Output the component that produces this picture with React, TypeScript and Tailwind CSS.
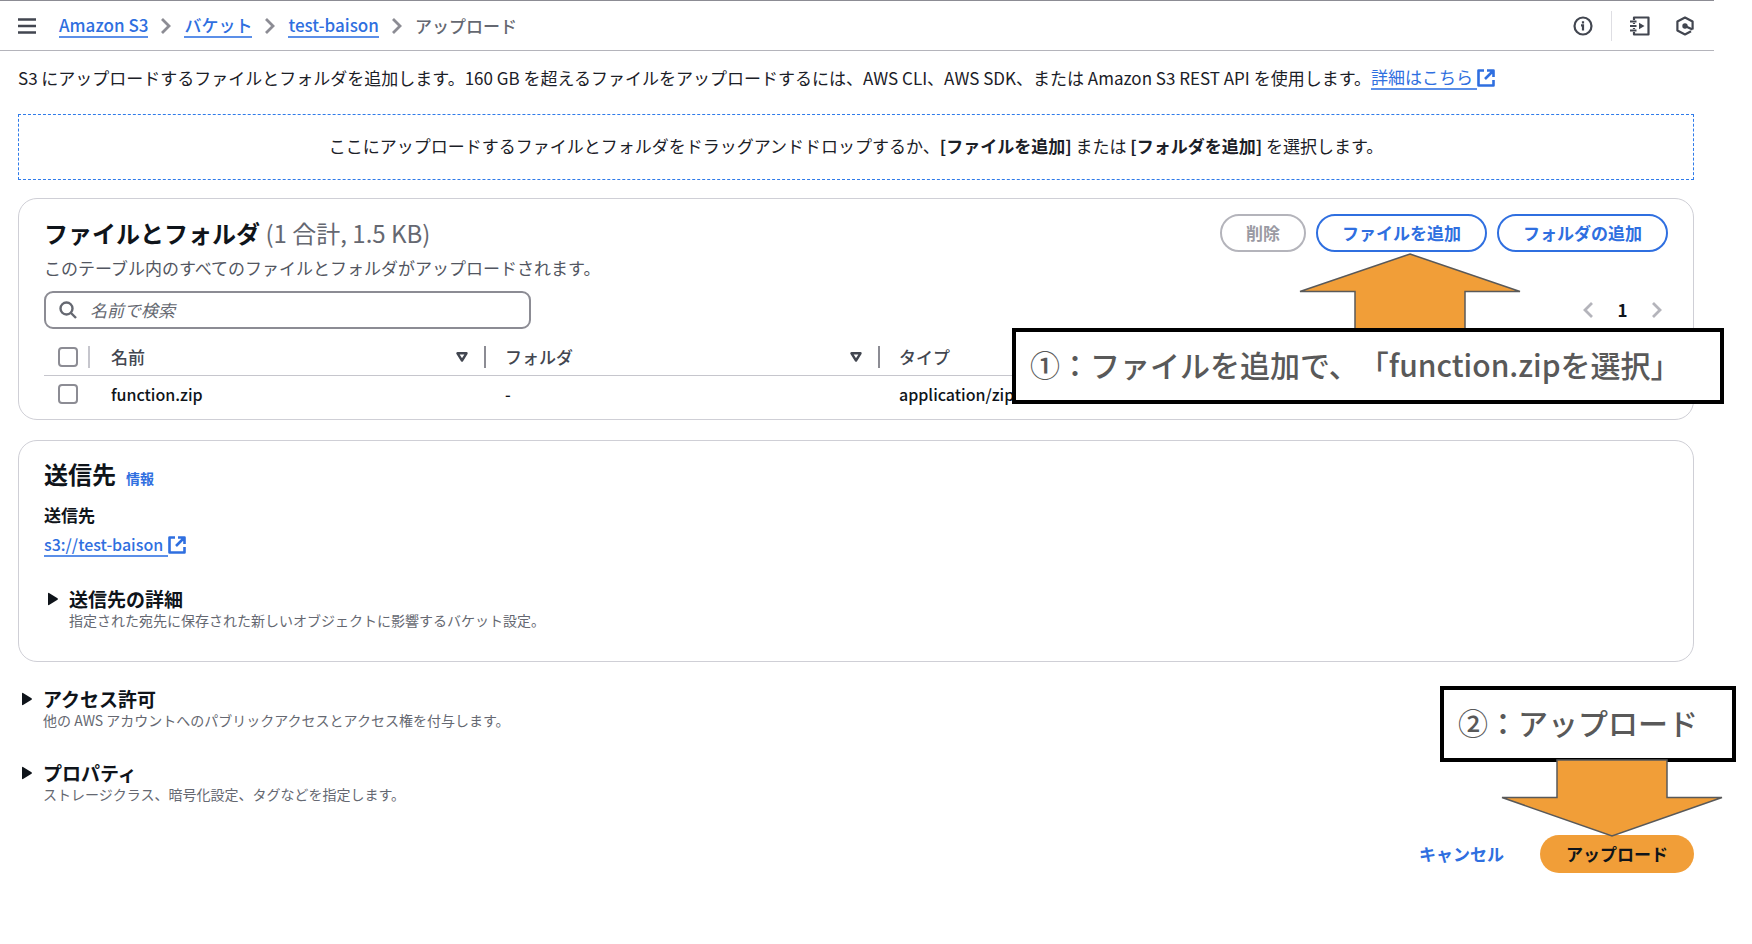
import { useState } from 'react';
import type { ReactNode } from 'react';

const files = [{ name: 'function.zip', folder: '-', type: 'application/zip' }];

function ChevronIcon({ className = '' }: { className?: string }) {
  return (
    <svg viewBox="0 0 10 16" className={`w-[10px] h-4 shrink-0 ${className}`} fill="none" stroke="currentColor" strokeWidth="2.8" aria-hidden="true">
      <path d="M1 1l7 7-7 7" />
    </svg>
  );
}

function ExternalIcon() {
  return (
    <svg viewBox="0 0 18 18" className="inline-block w-[18px] h-[18px] shrink-0" fill="none" stroke="currentColor" strokeWidth="2.6" strokeLinejoin="round" aria-hidden="true">
      <path d="M7 1.500H1.500v15h15V11M10 1.500h6.500V8M16.500 1.500L8 10" />
    </svg>
  );
}

function SortIcon() {
  return (
    <svg viewBox="0 0 12 10" className="w-3 h-[10px]" fill="none" stroke="currentColor" strokeWidth="2.4" strokeLinejoin="round" aria-hidden="true">
      <path d="M1.500 1.300h9L6 8.500z" />
    </svg>
  );
}

function Checkbox({ label }: { label: string }) {
  return (
    <input
      type="checkbox"
      aria-label={label}
      className="block appearance-none w-5 h-5 ml-[14px] rounded-[4px] border-2 border-[#8c8c94] bg-white checked:bg-[#2f6fe0]"
    />
  );
}

function HeaderCell({ children, sortable }: { children: ReactNode; sortable?: boolean }) {
  return (
    <th scope="col" className="p-0 text-left font-medium text-[#424650]">
      <div className="flex items-center justify-between h-[22px] pl-[21px] pr-[16px]">
        {children}
        {sortable && <SortIcon />}
      </div>
    </th>
  );
}

function Expandable({ title, description }: { title: string; description: string }) {
  const [open, setOpen] = useState(false);

  return (
    <div className="flex gap-[10px]">
      <svg viewBox="0 0 12 14" className="w-3 h-[14px] mt-[5px] ml-[3px] shrink-0" fill="#0f141a" aria-hidden="true">
        <path d="M1 1.500Q1 .5 2 1l8.500 5.300q1 .7 0 1.400L2 13q-1 .5-1-.5z" />
      </svg>
      <div>
        <h3>
          <button
            aria-expanded={open}
            onClick={() => setOpen(!open)}
            className="block text-[19px] leading-6 font-bold"
          >
            {title}
          </button>
        </h3>
        <p className="text-sm leading-[18px] text-[#656871]">{description}</p>
      </div>
    </div>
  );
}

function Callout({ className, children }: { className: string; children: ReactNode }) {
  return (
    <div
      className={`absolute z-10 flex items-center h-[76px] pl-[14px] pb-1 border-4 border-black bg-white text-3xl font-medium whitespace-nowrap text-[#595959] ${className}`}
    >
      {children}
    </div>
  );
}

function Header() {
  return (
    <header className="flex items-center h-[51px] mr-[38px] pl-[18px] pr-[19px] border-t border-b border-t-[#8c8c94] border-b-[#b4b4bb]">
      <button aria-label="メニュー" className="text-[#424650]">
        <svg viewBox="0 0 18 18" className="w-[18px] h-[18px]" stroke="currentColor" strokeWidth="2.400" aria-hidden="true">
          <path d="M0 2.500h18M0 9h18M0 15.500h18" />
        </svg>
      </button>
      <nav aria-label="breadcrumb" className="ml-[23px]">
        <ol className="flex items-center gap-[13px] leading-[22px] font-medium text-[#656871]">
          {['Amazon S3', 'バケット', 'test-baison'].map((item) => (
            <li key={item} className="flex items-center gap-[13px]">
              <a href="#" className="border-b-2 border-[#5b8fe8] text-[#2f6fe0]">{item}</a>
              <ChevronIcon className="text-[#8c8c94]" />
            </li>
          ))}
          <li>アップロード</li>
        </ol>
      </nav>
      <div className="ml-auto flex items-center text-[#424650]">
        <button aria-label="情報">
          <svg viewBox="0 0 20 20" className="w-5 h-5" fill="none" stroke="currentColor" strokeWidth="2.200" aria-hidden="true">
            <circle cx="10" cy="10" r="8.500" />
            <path d="M8 9.300h2V14.500M10 5.200v2.300" strokeWidth="2.200" />
          </svg>
        </button>
        <div className="w-px h-[30px] ml-[18px] mr-[18px] bg-[#dedee3]" />
        <button aria-label="チュートリアル">
          <svg viewBox="0 0 20 20" className="w-5 h-5" fill="none" stroke="currentColor" strokeWidth="2.200" strokeLinejoin="round" aria-hidden="true">
            <path d="M4 4V1.500h14.500v17H4V16M4 7v1M4 12v1" />
            <path d="M0 5.500h6.500M0 10h6.500M0 14.500h6.500" strokeWidth="1.800" />
            <path d="M9 6.800v6.400l5.500-3.200z" fill="currentColor" stroke="none" />
          </svg>
        </button>
        <button aria-label="Amazon Q" className="ml-[25px]">
          <svg viewBox="0 0 20 20" className="w-5 h-5" fill="none" stroke="currentColor" strokeWidth="2.200" strokeLinejoin="round" aria-hidden="true">
            <path d="M17.600 13.500V5.500L10 1.500 2.400 5.500v9L10 18.500l6-3.200" />
            <circle cx="10" cy="10" r="2.700" fill="currentColor" stroke="none" />
            <path d="M10 10l7.500 3.500" strokeWidth="2.400" />
          </svg>
        </button>
      </div>
    </header>
  );
}

function FilesPanel() {
  return (
    <section className="relative mt-[18px] pt-[15px] pb-[6px] px-[25px] border border-[#cfcfd6] rounded-[19px]">
      <div className="flex items-center justify-between">
        <h2 className="text-2xl leading-[38px] font-bold">
          ファイルとフォルダ <span className="font-normal text-[#656871]">(1 合計, 1.5 KB)</span>
        </h2>
        <div className="flex gap-[10px] font-bold">
          <button disabled className="h-[38px] px-6 border-2 border-[#b4b4bb] rounded-full text-[#9a9aa3]">削除</button>
          <button className="h-[38px] px-6 border-2 border-[#2f6fe0] rounded-full text-[#2f6fe0]">ファイルを追加</button>
          <button className="h-[38px] px-6 border-2 border-[#2f6fe0] rounded-full text-[#2f6fe0]">フォルダの追加</button>
        </div>
      </div>
      <p className="mt-1 leading-6 text-[#525661]">このテーブル内のすべてのファイルとフォルダがアップロードされます。</p>
      <div className="mt-[11px] flex items-center justify-between">
        <label className="flex items-center w-[487px] h-[38px] pl-[13px] border-2 border-[#8c8c94] rounded-[9px]">
          <svg viewBox="0 0 18 18" className="w-[18px] h-[18px] text-[#656871]" fill="none" stroke="currentColor" strokeWidth="2.400" aria-hidden="true">
            <circle cx="7.500" cy="7.500" r="6" />
            <path d="M12 12l5 5" />
          </svg>
          <input
            type="search"
            aria-label="名前で検索"
            placeholder="名前で検索"
            className="grow ml-[13px] outline-none placeholder:italic placeholder:text-[#656871] placeholder:opacity-100"
          />
        </label>
        <nav aria-label="ページ" className="flex items-center mr-[6px] text-[#b4b4bb]">
          <button aria-label="前のページ"><ChevronIcon className="rotate-180" /></button>
          <button className="w-[59px] font-bold text-[#0f141a]">1</button>
          <button aria-label="次のページ"><ChevronIcon /></button>
        </nav>
      </div>
      <table className="w-full mt-[10px] table-fixed border-collapse">
        <colgroup>
          <col className="w-[46px]" />
          <col className="w-[394px]" />
          <col className="w-[394px]" />
          <col />
        </colgroup>
        <thead>
          <tr className="h-9 border-b border-[#c6c6cd]">
            <th scope="col" className="p-0">
              <div className="flex items-center justify-between h-[22px] border-r-2 border-[#c6c6cd]">
                <Checkbox label="すべて選択" />
              </div>
            </th>
            <HeaderCell sortable>名前</HeaderCell>
            <HeaderCell sortable>
              <span className="h-[22px] -ml-[21px] pl-[19px] leading-[22px] border-l-2 border-[#8c8c94]">フォルダ</span>
            </HeaderCell>
            <HeaderCell>
              <span className="h-[22px] -ml-[21px] pl-[19px] leading-[22px] border-l-2 border-[#8c8c94]">タイプ</span>
            </HeaderCell>
          </tr>
        </thead>
        <tbody>
          {files.map((file) => (
            <tr key={file.name} className="h-[38px] text-base">
              <td className="p-0"><Checkbox label={file.name} /></td>
              <td className="p-0 pl-[21px] font-medium">{file.name}</td>
              <td className="p-0 pl-[21px] font-medium">{file.folder}</td>
              <td className="p-0 pl-[21px] font-medium">{file.type}</td>
            </tr>
          ))}
        </tbody>
      </table>

      <svg viewBox="0 0 222 78" className="absolute right-[172px] top-[54px] w-[222px] h-[78px]" fill="#f19e38" stroke="#595959" strokeWidth="1.500" aria-hidden="true">
        <path d="M111 1L221 38.500H166V80H56V38.500H1z" />
      </svg>
      <Callout className="top-[129px] -right-[31px] w-[712px]">①：ファイルを追加で、「function.zipを選択」</Callout>
    </section>
  );
}

function DestinationPanel() {
  return (
    <section className="mt-[20px] pt-[17px] pb-8 px-[25px] border border-[#cfcfd6] rounded-[19px]">
      <div className="flex items-baseline gap-[10px]">
        <h2 className="text-2xl leading-8 font-bold">送信先</h2>
        <a href="#" className="text-sm font-bold text-[#2f6fe0]">情報</a>
      </div>
      <h3 className="mt-[13px] leading-6 font-bold">送信先</h3>
      <a href="#" className="mt-[6px] inline-flex items-center text-base leading-[22px] font-medium text-[#2f6fe0]">
        <span className="pr-[5px] border-b-2 border-[#5b8fe8]">s3://test-baison</span>
        <ExternalIcon />
      </a>
      <div className="mt-[30px]">
        <Expandable title="送信先の詳細" description="指定された宛先に保存された新しいオブジェクトに影響するバケット設定。" />
      </div>
    </section>
  );
}

export default function App() {
  return (
    <div className="min-h-screen bg-white overflow-x-hidden font-['Noto_Sans_CJK_JP','Noto_Sans',sans-serif] [text-spacing-trim:space-all] text-[17px] leading-6 text-[#0f141a]">
      <Header />
      <main className="pl-[18px] pr-[58px] pb-[70px]">
        <p className="mt-[15px] flex items-center text-[#1b2027]">
          S3 にアップロードするファイルとフォルダを追加します。160 GB を超えるファイルをアップロードするには、AWS CLI、AWS SDK、または Amazon S3 REST API を使用します。
          <a href="#" className="flex items-center leading-[22px] text-[#2f6fe0]">
            <span className="pr-[4px] border-b-2 border-[#5b8fe8]">詳細はこちら</span>
            <ExternalIcon />
          </a>
        </p>
        <div className="mt-6 pt-[19px] pb-[21px] border border-dashed border-[#2f7bea] text-center text-[#1b2027]">
          ここにアップロードするファイルとフォルダをドラッグアンドドロップするか、<b>[ファイルを追加]</b> または <b>[フォルダを追加]</b> を選択します。
        </div>
        <FilesPanel />
        <DestinationPanel />
        <div className="mt-[25px] flex flex-col gap-8">
          <Expandable title="アクセス許可" description="他の AWS アカウントへのパブリックアクセスとアクセス権を付与します。" />
          <Expandable title="プロパティ" description="ストレージクラス、暗号化設定、タグなどを指定します。" />
        </div>
        <div className="relative mt-8 flex justify-end gap-3 font-bold">
          <button className="h-[38px] px-6 text-[#2f6fe0]">キャンセル</button>
          <button className="h-[38px] px-[26px] rounded-full bg-[#f19e38]">アップロード</button>
          <Callout className="-top-[149px] -right-[42px] w-[296px]">②：アップロード</Callout>
          <svg viewBox="0 0 222 78" className="absolute z-20 -right-[29px] -top-[76px] w-[222px] h-[78px]" fill="#f19e38" stroke="#595959" strokeWidth="1.500" aria-hidden="true">
            <path d="M56 1H166V38.500H221L111 77L1 38.500H56z" />
          </svg>
        </div>
      </main>
    </div>
  );
}
